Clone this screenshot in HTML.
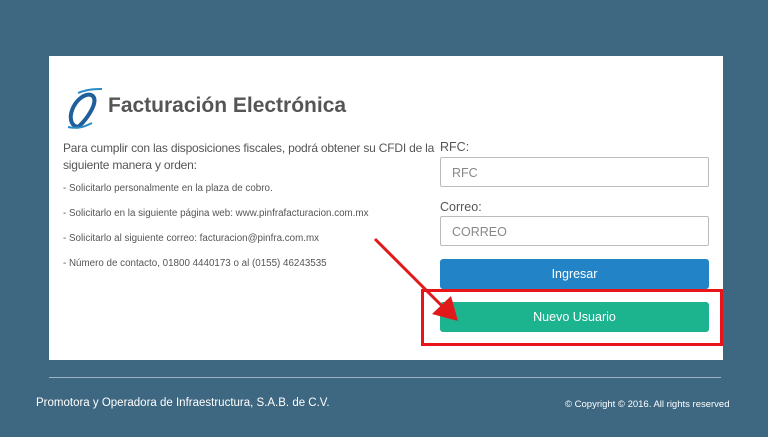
<!DOCTYPE html>
<html><head><meta charset="utf-8"><style>
body{margin:0;width:768px;height:437px;background:#3e6781;font-family:"Liberation Sans",sans-serif;position:relative;overflow:hidden}
.card{position:absolute;left:49px;top:56px;width:674px;height:304px;background:#fff}
.a{position:absolute}
.title{left:108px;top:94px;font-size:21px;font-weight:bold;color:#555}
.p{left:63px;top:140px;font-size:12px;color:#555;line-height:17px;width:392px;letter-spacing:-0.2px;white-space:nowrap}
.li{left:63px;font-size:9.8px;color:#555}
.lab{left:440px;font-size:12.5px;color:#555}
.in{left:440px;border:1px solid #bbb;border-radius:2px;box-sizing:border-box;width:269px;height:30px;font-size:12.5px;color:#888;padding:8px 11px}
.btn{left:440px;width:269px;height:30px;border-radius:3px;color:#fff;font-size:12.5px;text-align:center;line-height:30px}
</style></head><body>
<div class="card"></div>
<svg class="a" style="left:64px;top:87px" width="42" height="44" viewBox="0 0 42 44">
<path d="M14 40 C2 38 6 18 18 10 C28 4 34 10 28 22 C22 34 14 40 14 40" fill="none" stroke="#1f5f9a" stroke-width="4"/>
<path d="M14 6 C24 2 32 2 38 2" stroke="#2a8ac8" stroke-width="2" fill="none"/>
<path d="M4 40 C14 42 20 40 28 36" stroke="#2a8ac8" stroke-width="2" fill="none"/>
</svg>
<div class="a title">Facturación Electrónica</div>
<div class="a p">Para cumplir con las disposiciones fiscales, podrá obtener su CFDI de la<br>siguiente manera y orden:</div>
<div class="a li" style="top:183px">- Solicitarlo personalmente en la plaza de cobro.</div>
<div class="a li" style="top:208px">- Solicitarlo en la siguiente página web: www.pinfrafacturacion.com.mx</div>
<div class="a li" style="top:233px">- Solicitarlo al siguiente correo: facturacion@pinfra.com.mx</div>
<div class="a li" style="top:258px">- Número de contacto, 01800 4440173 o al (0155) 46243535</div>
<div class="a lab" style="top:140px">RFC:</div>
<div class="a in" style="top:157px">RFC</div>
<div class="a lab" style="top:200px">Correo:</div>
<div class="a in" style="top:216px">CORREO</div>
<div class="a btn" style="top:259px;background:#2283c6">Ingresar</div>
<div class="a btn" style="top:302px;background:#1cb38f">Nuevo Usuario</div>
<div class="a" style="left:421px;top:289px;width:296px;height:51px;border:3px solid #e8141a"></div>
<svg class="a" style="left:0;top:0" width="768" height="437"><line x1="375" y1="239" x2="446" y2="310" stroke="#e01a1a" stroke-width="3"/><polygon points="458,321 432,314 451,296" fill="#e01a1a"/></svg>
<div class="a" style="left:49px;top:377px;width:672px;height:1px;background:#9fb3c0"></div>
<div class="a" style="left:36px;top:397px;font-size:11.5px;color:#fff">Promotora y Operadora de Infraestructura, S.A.B. de C.V.</div>
<div class="a" style="left:565px;top:399px;font-size:9.5px;color:#fff">© Copyright © 2016. All rights reserved</div>
</body></html>
